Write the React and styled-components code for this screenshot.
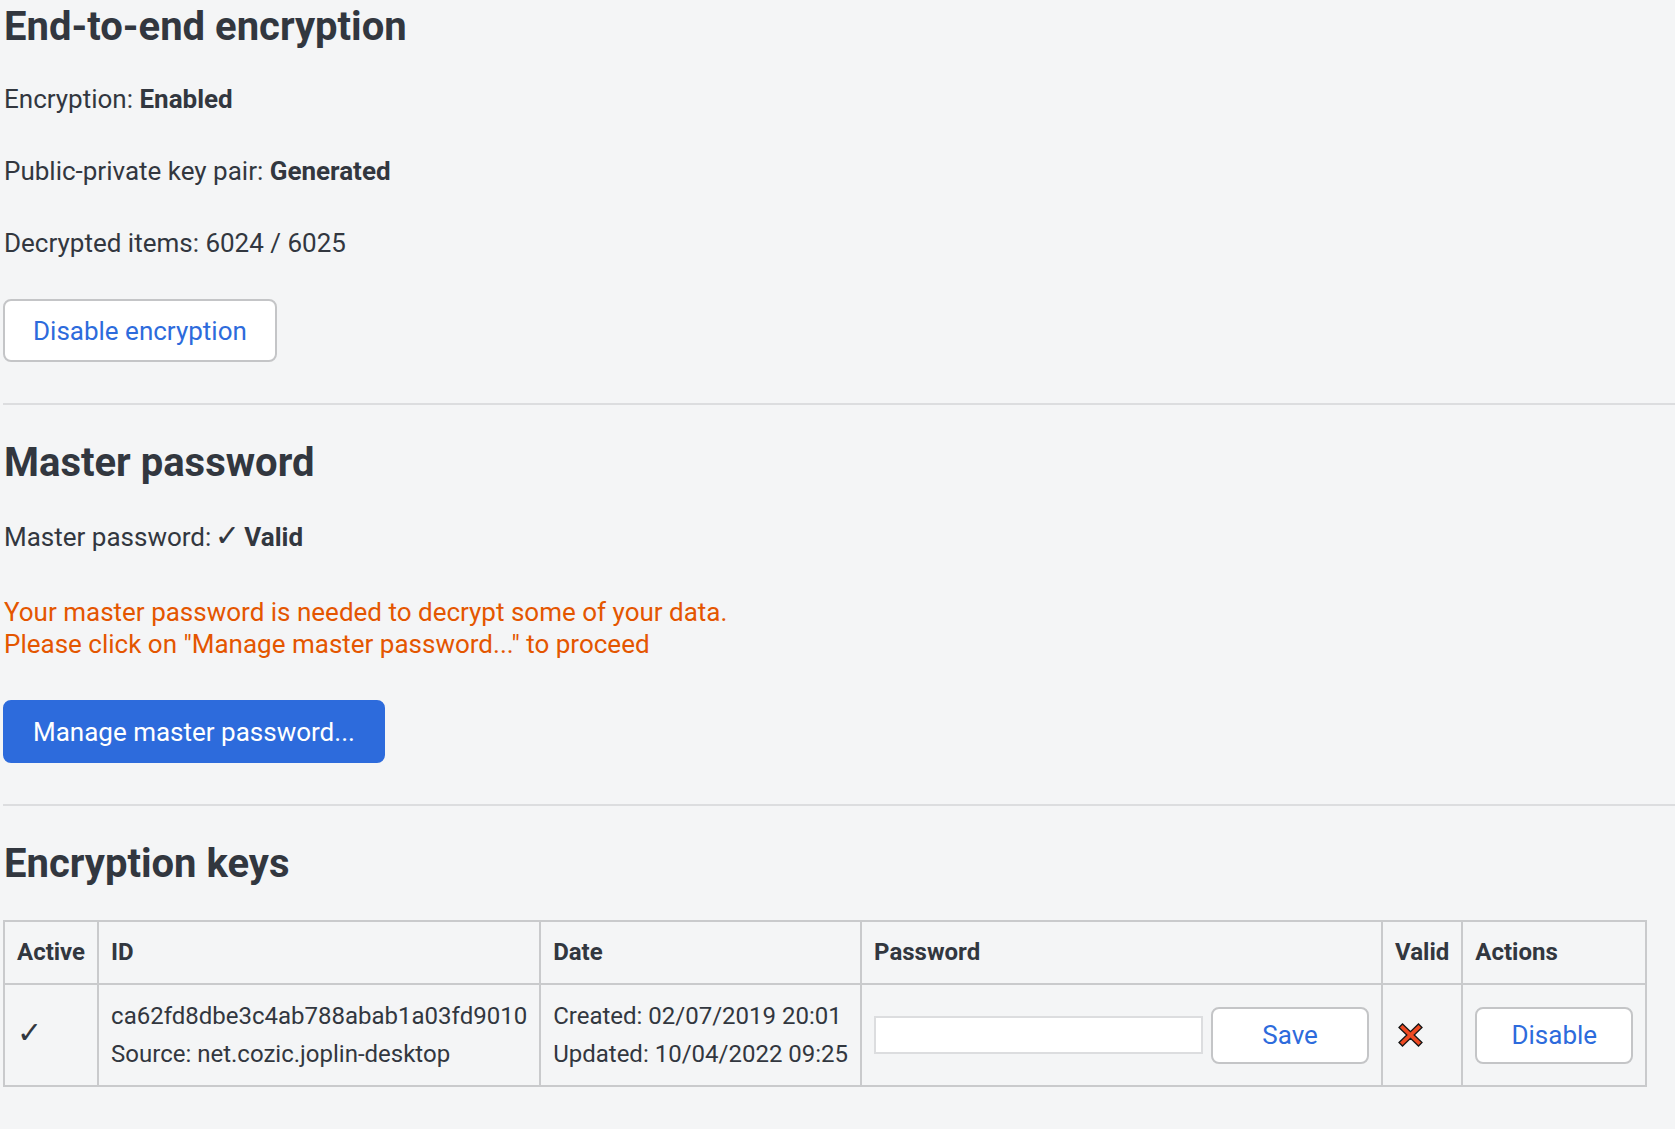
import React from "react";
import styled, { createGlobalStyle } from "styled-components";

const GlobalStyle = createGlobalStyle`
  html, body {
    margin: 0;
    padding: 0;
    background: #f4f5f6;
  }
  body {
    font-family: Roboto, "Liberation Sans", Arial, sans-serif;
    color: #32373f;
  }
`;

const Page = styled.div`
  padding: 3px 0 40px 3px;
  box-sizing: border-box;
  width: 100%;
`;

const Heading = styled.h2`
  font-size: 40px;
  line-height: 47px;
  font-weight: 700;
  margin: 0 0 33px 1px;
  color: #32373f;
`;

const Para = styled.p`
  font-size: 26px;
  line-height: ${(p) => (p.$tall ? 36 : 32)}px;
  margin: 0 0 ${(p) => (p.$tall ? 41 : 40)}px 1px;
  color: ${(p) => (p.$warn ? "rgb(228, 86, 0)" : "#32373f")};
`;

const Strong = styled.strong`
  font-weight: 700;
`;

const Button = styled.button`
  box-sizing: border-box;
  height: ${(p) => (p.$small ? 57 : 63)}px;
  min-width: ${(p) => (p.$small ? "158px" : "0")};
  padding: 0 28px;
  font-family: Roboto, "Liberation Sans", Arial, sans-serif;
  font-size: 26px;
  line-height: 32px;
  border-radius: 8px;
  cursor: pointer;
  border: 2px solid ${(p) => (p.$primary ? "#2d6bdc" : "#c4c5c7")};
  background: ${(p) => (p.$primary ? "#2d6bdc" : "#ffffff")};
  color: ${(p) => (p.$primary ? "#ffffff" : "#2d6bdc")};
  display: inline-flex;
  align-items: center;
  justify-content: center;
`;

const Divider = styled.hr`
  border: 0;
  height: 2px;
  background: #dcdddf;
  margin: 41px 0 34px 0;
`;

const Table = styled.table`
  border-collapse: collapse;
  font-size: 24px;
  color: #32373f;
`;

const HeadCell = styled.th`
  border: 2px solid #c9cacc;
  padding: 12px 12px;
  line-height: 37px;
  text-align: left;
  font-weight: 700;
  white-space: nowrap;
`;

const Cell = styled.td`
  border: 2px solid #c9cacc;
  padding: 12px 12px;
  line-height: 38px;
  vertical-align: middle;
  white-space: nowrap;
`;

const Line = styled.div`
  line-height: 38px;
`;

const PasswordBox = styled.div`
  display: flex;
  align-items: center;
  gap: 8px;
`;

const PasswordInput = styled.input`
  box-sizing: border-box;
  width: 329px;
  height: 38px;
  border: 2px solid #dcdddf;
  background: #ffffff;
  outline: none;
  font-size: 24px;
  padding: 0 6px;
`;

const Check = styled.span`
  font-family: "DejaVu Sans", sans-serif;
  font-size: 30px;
  line-height: 30px;
  font-weight: 400;
  margin-left: ${(p) => (p.$inline ? -3 : 0)}px;
  margin-right: ${(p) => (p.$inline ? -2 : 0)}px;
`;

const IconWrap = styled.div`
  margin-left: 3px;
`;

const CrossIcon = () => (
  <svg width="25" height="24" viewBox="0 0 25 24" style={{ display: "block" }}>
    <polygon
      points="1,4.5 4.5,1 12.5,8.6 20.5,1 24,4.5 16.2,12 24,19.5 20.5,23 12.5,15.4 4.5,23 1,19.5 8.8,12"
      fill="#ee4a22"
      stroke="#151515"
      strokeWidth="1.3"
      strokeLinejoin="miter"
    />
  </svg>
);

export default function App() {
  return (
    <>
      <GlobalStyle />
      <Page>
        <Heading>End-to-end encryption</Heading>
        <Para>
          Encryption: <Strong>Enabled</Strong>
        </Para>
        <Para>
          Public-private key pair: <Strong>Generated</Strong>
        </Para>
        <Para>Decrypted items: 6024 / 6025</Para>
        <Button>Disable encryption</Button>

        <Divider />

        <Heading>Master password</Heading>
        <Para $tall>
          Master password:{" "}
          <Strong>
            <Check $inline>✓</Check> Valid
          </Strong>
        </Para>
        <Para $warn>
          Your master password is needed to decrypt some of your data.
          <br />
          Please click on "Manage master password..." to proceed
        </Para>
        <Button $primary>Manage master password...</Button>

        <Divider />

        <Heading>Encryption keys</Heading>
        <Table>
          <thead>
            <tr>
              <HeadCell>Active</HeadCell>
              <HeadCell>ID</HeadCell>
              <HeadCell>Date</HeadCell>
              <HeadCell>Password</HeadCell>
              <HeadCell>Valid</HeadCell>
              <HeadCell>Actions</HeadCell>
            </tr>
          </thead>
          <tbody>
            <tr>
              <Cell>
                <Check>✓</Check>
              </Cell>
              <Cell>
                <Line>ca62fd8dbe3c4ab788abab1a03fd9010</Line>
                <Line>Source: net.cozic.joplin-desktop</Line>
              </Cell>
              <Cell>
                <Line>Created: 02/07/2019 20:01</Line>
                <Line>Updated: 10/04/2022 09:25</Line>
              </Cell>
              <Cell>
                <PasswordBox>
                  <PasswordInput type="password" />
                  <Button $small>Save</Button>
                </PasswordBox>
              </Cell>
              <Cell>
                <IconWrap>
                  <CrossIcon />
                </IconWrap>
              </Cell>
              <Cell>
                <Button $small>Disable</Button>
              </Cell>
            </tr>
          </tbody>
        </Table>
      </Page>
    </>
  );
}
